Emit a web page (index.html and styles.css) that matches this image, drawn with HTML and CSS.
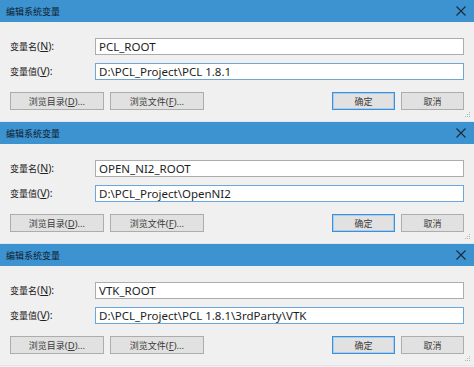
FILE: index.html
```html
<!DOCTYPE html>
<html lang="zh-CN">

<head>
    <meta charset="UTF-8">
    <title>编辑系统变量</title>
    <link rel="stylesheet" href="styles.css">
</head>

<body>

    <!-- Dialog 1 -->
    <div class="dialog">
        <div class="titlebar">
            <span class="title">编辑系统变量</span>
            <svg class="close" width="10" height="10" viewBox="0 0 10 10"><path d="M0.5 0.5L9.5 9.5M9.5 0.5L0.5 9.5" stroke="#1a2a3a" stroke-width="1.1"/></svg>
        </div>
        <div class="content">
            <div class="fields">
                <label><span class="zh">变量名</span>(<u>N</u>):</label>
                <div class="input">PCL_ROOT</div>
                <label><span class="zh">变量值</span>(<u>V</u>):</label>
                <div class="input focused">D:\PCL_Project\PCL 1.8.1</div>
            </div>
            <div class="buttons">
                <button class="btn wide"><span class="zh">浏览目录</span>(<u>D</u>)...</button>
                <button class="btn wide"><span class="zh">浏览文件</span>(<u>F</u>)...</button>
                <span class="spacer"></span>
                <button class="btn default"><span class="zh">确定</span></button>
                <button class="btn"><span class="zh">取消</span></button>
            </div>
            <svg class="grip" width="6" height="6" viewBox="0 0 6 6"><rect x="4" y="0" width="1" height="1"/><rect x="2" y="2" width="1" height="1"/><rect x="4" y="2" width="1" height="1"/><rect x="0" y="4" width="1" height="1"/><rect x="2" y="4" width="1" height="1"/><rect x="4" y="4" width="1" height="1"/></svg>
        </div>
    </div>

    <!-- Dialog 2 -->
    <div class="dialog">
        <div class="titlebar">
            <span class="title">编辑系统变量</span>
            <svg class="close" width="10" height="10" viewBox="0 0 10 10"><path d="M0.5 0.5L9.5 9.5M9.5 0.5L0.5 9.5" stroke="#1a2a3a" stroke-width="1.1"/></svg>
        </div>
        <div class="content">
            <div class="fields">
                <label><span class="zh">变量名</span>(<u>N</u>):</label>
                <div class="input">OPEN_NI2_ROOT</div>
                <label><span class="zh">变量值</span>(<u>V</u>):</label>
                <div class="input focused">D:\PCL_Project\OpenNI2</div>
            </div>
            <div class="buttons">
                <button class="btn wide"><span class="zh">浏览目录</span>(<u>D</u>)...</button>
                <button class="btn wide"><span class="zh">浏览文件</span>(<u>F</u>)...</button>
                <span class="spacer"></span>
                <button class="btn default"><span class="zh">确定</span></button>
                <button class="btn"><span class="zh">取消</span></button>
            </div>
            <svg class="grip" width="6" height="6" viewBox="0 0 6 6"><rect x="4" y="0" width="1" height="1"/><rect x="2" y="2" width="1" height="1"/><rect x="4" y="2" width="1" height="1"/><rect x="0" y="4" width="1" height="1"/><rect x="2" y="4" width="1" height="1"/><rect x="4" y="4" width="1" height="1"/></svg>
        </div>
    </div>

    <!-- Dialog 3 -->
    <div class="dialog">
        <div class="titlebar">
            <span class="title">编辑系统变量</span>
            <svg class="close" width="10" height="10" viewBox="0 0 10 10"><path d="M0.5 0.5L9.5 9.5M9.5 0.5L0.5 9.5" stroke="#1a2a3a" stroke-width="1.1"/></svg>
        </div>
        <div class="content">
            <div class="fields">
                <label><span class="zh">变量名</span>(<u>N</u>):</label>
                <div class="input">VTK_ROOT</div>
                <label><span class="zh">变量值</span>(<u>V</u>):</label>
                <div class="input focused">D:\PCL_Project\PCL 1.8.1\3rdParty\VTK</div>
            </div>
            <div class="buttons">
                <button class="btn wide"><span class="zh">浏览目录</span>(<u>D</u>)...</button>
                <button class="btn wide"><span class="zh">浏览文件</span>(<u>F</u>)...</button>
                <span class="spacer"></span>
                <button class="btn default"><span class="zh">确定</span></button>
                <button class="btn"><span class="zh">取消</span></button>
            </div>
            <svg class="grip" width="6" height="6" viewBox="0 0 6 6"><rect x="4" y="0" width="1" height="1"/><rect x="2" y="2" width="1" height="1"/><rect x="4" y="2" width="1" height="1"/><rect x="0" y="4" width="1" height="1"/><rect x="2" y="4" width="1" height="1"/><rect x="4" y="4" width="1" height="1"/></svg>
        </div>
    </div>

</body>

</html>
```

FILE: styles.css
```css
html, body {
    margin: 0;
    padding: 0;
    overflow: hidden;
    background-color: #f0f0f0;
    font-family: "Noto Sans", "Noto Sans CJK SC", sans-serif;
    font-size: 11px;
    color: #1e1e1e;
}

.zh {
    font-size: 9px;
}

.dialog {
    display: flex;
    flex-direction: column;
    height: 122px;
}

/* Title bar */
.titlebar {
    height: 22px;
    flex: none;
    display: flex;
    align-items: center;
    justify-content: space-between;
    padding: 0 8px 0 6px;
    background-color: #3c93cf;
}

.title {
    font-size: 9px;
    color: #102030;
}

.close {
    display: block;
}

/* Body */
.content {
    position: relative;
    flex: 1;
    padding: 16px 10px 0 10px;
    border-bottom: 1px solid #dfe6ee;
}

.fields {
    display: grid;
    grid-template-columns: 85px 1fr;
    row-gap: 8px;
    align-items: center;
}

.fields label {
    font-size: 10.5px;
    line-height: 17px;
    color: #222;
}

.input {
    height: 15px;
    line-height: 15px;
    padding: 0 3px;
    font-size: 11.5px;
    background-color: #fff;
    border: 1px solid #acacac;
    white-space: nowrap;
    overflow: hidden;
}

.input.focused {
    border-color: #6fa6d8;
}

/* Buttons */
.buttons {
    display: flex;
    gap: 6px;
    margin-top: 12px;
}

.spacer {
    flex: 1;
}

.btn {
    height: 18px;
    width: 63px;
    padding: 0;
    font-family: inherit;
    font-size: 9.5px;
    color: #3a3a3a;
    background-color: #e1e1e1;
    border: 1px solid #adadad;
}

.btn.wide {
    width: 94px;
}

.btn.default {
    border: 1px solid #3c8fd8;
    box-shadow: inset 0 0 0 1px #a8cdee;
}

.grip {
    position: absolute;
    right: 3px;
    bottom: 3px;
    fill: #b4b4b4;
}
```
